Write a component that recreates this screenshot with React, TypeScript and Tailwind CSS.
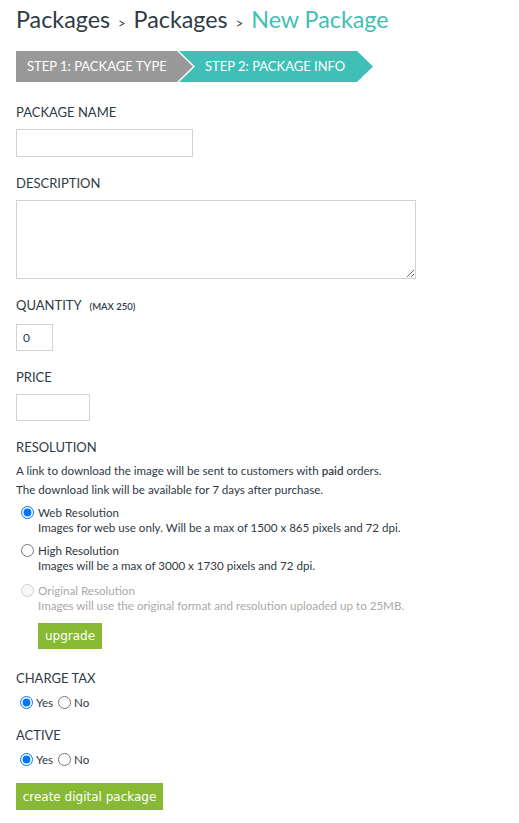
import React from "react";

const label = "block text-[13px] leading-[20px] text-[#2f3a45] uppercase";
const inputBox = "block border border-[#cdd3db] bg-white outline-none";

function RadioRow({
  name,
  title,
  desc,
  checked,
  disabled,
  className,
}: {
  name: string;
  title: string;
  desc: string;
  checked?: boolean;
  disabled?: boolean;
  className?: string;
}) {
  return (
    <label className={`flex items-start ${className ?? ""}`}>
      <input
        type="radio"
        name={name}
        defaultChecked={checked}
        disabled={disabled}
        className="m-0 ml-[5px] mt-[1px] h-[13px] w-[13px] shrink-0"
      />
      <span className={`ml-[4px] text-[11.6px] leading-[15px] ${disabled ? "text-[#a9a9a9]" : "text-[#2f3a45]"}`}>
        <span className="block">{title}</span>
        <span className="block">{desc}</span>
      </span>
    </label>
  );
}

function YesNo({ name }: { name: string }) {
  return (
    <div className="flex items-center text-[11.6px] leading-[15px] text-[#2f3a45]">
      <input type="radio" name={name} defaultChecked className="m-0 ml-[4px] h-[13px] w-[13px]" />
      <span className="ml-[3px]">Yes</span>
      <input type="radio" name={name} className="m-0 ml-[5px] h-[13px] w-[13px]" />
      <span className="ml-[3px]">No</span>
    </div>
  );
}

export default function App() {
  return (
    <div className="min-h-[823px] bg-white px-[16px] pt-[3px] font-['Lato',sans-serif]">
      {/* breadcrumb */}
      <h1 className="flex h-[32px] items-baseline text-[23.3px] leading-[32px] text-[#2f3a45]">
        <span>Packages</span>
        <span className="mx-[8px] text-[13px]">&gt;</span>
        <span>Packages</span>
        <span className="mx-[8px] text-[13px]">&gt;</span>
        <span className="text-[#3fbfb5]">New Package</span>
      </h1>

      {/* steps */}
      <div className="mt-[16px] flex h-[31px]">
        <div className="flex h-full w-[177px] items-center bg-[#999999] pl-[11px] text-[13px] text-white [clip-path:polygon(0_0,161px_0,177px_50%,161px_100%,0_100%)]">
          STEP 1: PACKAGE TYPE
        </div>
        <div className="-ml-[14px] flex h-full w-[194px] items-center bg-[#3fbfb5] pl-[26px] text-[13px] text-white [clip-path:polygon(0_0,178px_0,194px_50%,178px_100%,0_100%,16px_50%)]">
          STEP 2: PACKAGE INFO
        </div>
      </div>

      {/* package name */}
      <label className={`${label} mt-[20px]`}>Package Name</label>
      <input type="text" className={`${inputBox} mt-[7px] h-[28px] w-[177px]`} />

      <label className={`${label} mt-[16px]`}>Description</label>
      <textarea className={`${inputBox} mt-[7px] h-[79px] w-[400px]`} />

      <div className={`${label} mt-[16px] flex items-baseline`}>
        <span>Quantity</span>
        <span className="ml-[8px] text-[9.5px] font-semibold">(MAX 250)</span>
      </div>
      <input
        type="text"
        defaultValue="0"
        className={`${inputBox} mt-[7px] h-[27px] w-[37px] px-[6px] text-[12px] text-[#2f3a45]`}
      />

      <label className={`${label} mt-[16px]`}>Price</label>
      <input type="text" className={`${inputBox} mt-[7px] h-[27px] w-[74px]`} />

      <div className={`${label} mt-[16px]`}>Resolution</div>
      <p className="mt-[4px] text-[11.6px] leading-[19px] text-[#2f3a45]">
        A link to download the image will be sent to customers with <span className="font-semibold">paid</span> orders.
        <br />
        The download link will be available for 7 days after purchase.
      </p>

      <RadioRow
        className="mt-[6px]"
        name="res"
        checked
        title="Web Resolution"
        desc="Images for web use only. Will be a max of 1500 x 865 pixels and 72 dpi."
      />
      <RadioRow
        className="mt-[8px]"
        name="res"
        title="High Resolution"
        desc="Images will be a max of 3000 x 1730 pixels and 72 dpi."
      />
      <RadioRow
        className="mt-[10px]"
        name="res"
        disabled
        title="Original Resolution"
        desc="Images will use the original format and resolution uploaded up to 25MB."
      />
      <button className="ml-[22px] mt-[10px] h-[26px] w-[64px] bg-[#87b935] font-['DejaVu_Sans',sans-serif] text-[12px] text-white">
        upgrade
      </button>

      <div className={`${label} mt-[19px]`}>Charge Tax</div>
      <div className="mt-[7px]">
        <YesNo name="tax" />
      </div>

      <div className={`${label} mt-[15px]`}>Active</div>
      <div className="mt-[7px]">
        <YesNo name="active" />
      </div>

      <button className="mt-[16px] block h-[27px] w-[147px] bg-[#87b935] font-['DejaVu_Sans',sans-serif] text-[12px] text-white">
        create digital package
      </button>
    </div>
  );
}
